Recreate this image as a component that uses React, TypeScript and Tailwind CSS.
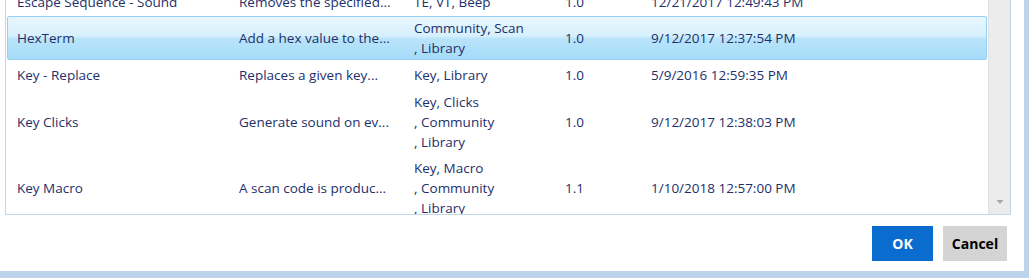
import React from "react";

type Row = {
  name: string;
  description: string;
  tags: string[];
  version: string;
  date: string;
  h: string;
  selected?: boolean;
};

const rows: Row[] = [
  {
    name: "Escape Sequence - Sound",
    description: "Removes the specified...",
    tags: ["TE, VT, Beep"],
    version: "1.0",
    date: "12/21/2017 12:49:43 PM",
    h: "h-[29px]",
  },
  {
    name: "HexTerm",
    description: "Add a hex value to the...",
    tags: ["Community, Scan", ", Library"],
    version: "1.0",
    date: "9/12/2017 12:37:54 PM",
    h: "h-[44px]",
    selected: true,
  },
  {
    name: "Key - Replace",
    description: "Replaces a given key...",
    tags: ["Key, Library"],
    version: "1.0",
    date: "5/9/2016 12:59:35 PM",
    h: "h-[29px]",
  },
  {
    name: "Key Clicks",
    description: "Generate sound on ev...",
    tags: ["Key, Clicks", ", Community", ", Library"],
    version: "1.0",
    date: "9/12/2017 12:38:03 PM",
    h: "h-[66px]",
  },
  {
    name: "Key Macro",
    description: "A scan code is produc...",
    tags: ["Key, Macro", ", Community", ", Library"],
    version: "1.1",
    date: "1/10/2018 12:57:00 PM",
    h: "h-[66px]",
  },
];

function ListRow({ row }: { row: Row }) {
  const base = row.selected
    ? "border border-[#96d0f4] rounded-[2px] bg-[linear-gradient(to_bottom,#e8f6fe_0%,#d6f0fc_45%,#b9e4fa_52%,#a5dbf8_100%)]"
    : "border border-transparent";
  return (
    <div className={`mx-[1px] flex items-center pl-[9px] ${row.h} ${base}`}>
      <div className="w-[222px] shrink-0 truncate">{row.name}</div>
      <div className="w-[175px] shrink-0 whitespace-nowrap">{row.description}</div>
      <div className="w-[151px] shrink-0 whitespace-nowrap">
        {row.tags.map((t) => (
          <div key={t}>{t}</div>
        ))}
      </div>
      <div className="w-[86px] shrink-0">{row.version}</div>
      <div className="whitespace-nowrap">{row.date}</div>
    </div>
  );
}

export default function App() {
  return (
    <div className="flex h-[278px] w-[1029px] flex-col bg-[#bcd3ea] font-['Segoe_UI','Open_Sans',sans-serif]">
      <div className="flex h-[271px] w-[1024px] flex-col bg-white">
        <div className="ml-[5px] flex h-[215px] w-[1006px] overflow-hidden border-x border-b border-[#c3d6e9]">
          <div className="w-[982px] shrink-0 overflow-hidden text-[13.5px] leading-[20px] text-[#1e2f6b]">
            <div className="mt-[-13px]">
              {rows.map((r) => (
                <ListRow key={r.name} row={r} />
              ))}
            </div>
          </div>
          <div className="flex w-[22px] shrink-0 flex-col justify-end border-l border-[#e2e2e2] bg-[#ececec] pb-[8px]">
            <svg width="22" height="8" viewBox="0 0 22 8" className="block">
              <path d="M7.5 2 L14.5 2 L11 6 Z" fill="#a6a6a6" />
            </svg>
          </div>
        </div>
        <div className="flex justify-end gap-[10px] pr-[17px] pt-[11px]">
          <button className="h-[35px] w-[61px] bg-[#0a6ccf] text-[14px] font-bold text-white">
            OK
          </button>
          <button className="h-[35px] w-[64px] bg-[#d4d4d4] text-[14px] font-bold text-black">
            Cancel
          </button>
        </div>
      </div>
    </div>
  );
}
